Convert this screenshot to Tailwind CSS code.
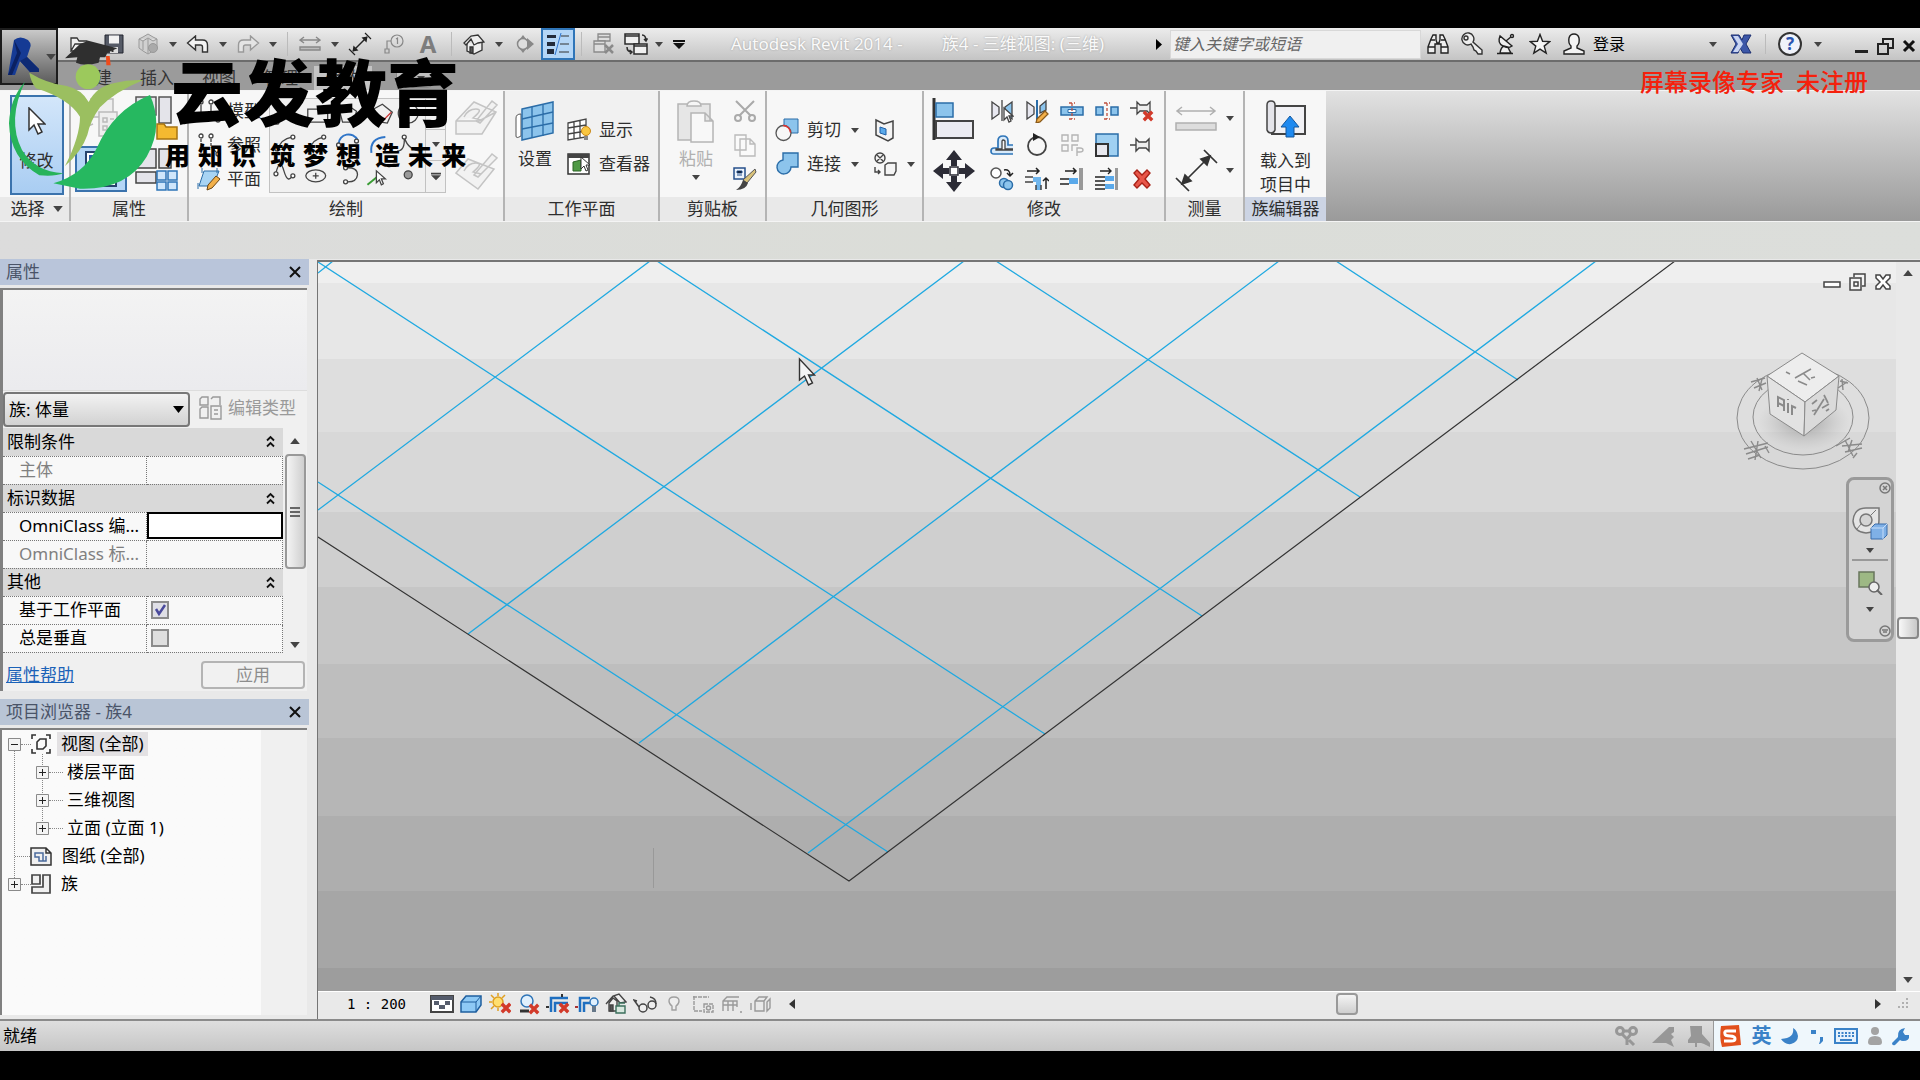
<!DOCTYPE html>
<html lang="zh-CN">
<head>
<meta charset="utf-8">
<title>Autodesk Revit 2014 - 族4</title>
<script src="https://cdn.jsdelivr.net/npm/@tailwindcss/browser@4"></script>
</head>
<body class="relative flex min-h-screen flex-col overflow-x-hidden bg-black font-['Noto_Sans','Noto_Sans_CJK_SC',sans-serif] text-[17px] leading-6 text-[#2e2e2e]">
<svg class="hidden">
  <symbol id="dd" viewBox="0 0 8 5"><path d="M0 0h8L4 5z" fill="#444"/></symbol>
  <symbol id="rx" viewBox="0 0 10 10"><path d="M1.500 1.500l7 7M8.500 1.500l-7 7" stroke="#d23a2a" stroke-width="2.800" fill="none"/></symbol>
  <symbol id="plus" viewBox="0 0 13 13"><path d="M.5.5h12v12H.5z" fill="#f4f4f4" stroke="#8a8a8a"/><path d="M3 6.500h7M6.500 3v7" stroke="#222"/></symbol>
  <symbol id="minus" viewBox="0 0 13 13"><path d="M.5.5h12v12H.5z" fill="#f4f4f4" stroke="#8a8a8a"/><path d="M3 6.500h7" stroke="#222"/></symbol>
  <symbol id="chev" viewBox="0 0 9 13"><path d="M1 5.500l3.500-3.500L8 5.500M1 11.500l3.500-3.500L8 11.500" fill="none" stroke="#111" stroke-width="1.800"/></symbol>
  <symbol id="arrow" viewBox="0 0 18 28"><path d="M1 1v22l5-5 4 9 4-2-4-8h7z" fill="#fff" stroke="#333" stroke-width="1.500"/></symbol>
</svg>

<div class="h-7 shrink-0"></div>

<!-- title bar -->
<header class="relative flex h-[34px] shrink-0 items-center border-b-2 border-[#6c6c6c] bg-linear-to-b from-[#ececec] to-[#c4c4c4] pl-[63px]">
  <button aria-label="应用程序菜单" class="absolute left-0 top-0 z-10 flex h-[57px] w-[58px] items-center border-2 border-[#1c1c1c] bg-linear-to-b from-[#c9c9c9] to-[#5d5d5d] pl-1">
    <svg class="h-10 w-9" viewBox="0 0 36 40"><path d="M8 3q6-5 14 0 4 4 2 8l-3 9 12 12v3h-9L14 24 9 38H2z" fill="#153a94"/><path d="M8 3l3 13L2 38h4l9-22z" fill="#0b2161"/><path d="M14 24l7-4 12 12v3h-9z" fill="#0e2a74"/></svg>
    <svg class="ml-1 h-[6px] w-[10px]"><use href="#dd"/></svg>
  </button>
  <nav aria-label="快速访问工具栏" class="flex h-8 shrink-0 items-center">
    <button aria-label="打开" class="flex w-[34px] justify-center"><svg class="h-5 w-6" viewBox="0 0 24 20" fill="#eee" stroke="#333" stroke-width="1.300"><path d="M3 17V4h6l2 3h8v3M3 17l4-7h15l-4 7z"/></svg></button>
    <button aria-label="保存" class="flex w-[34px] justify-center"><svg class="size-5" viewBox="0 0 20 20"><path d="M1 1h18v18H3l-2-2z" fill="#555a66" stroke="#22252e"/><path d="M5 1.500h10v8H5z" fill="#f2f2f2"/><path d="M6 13h8v6H6z" fill="#ddd"/><path d="M7.500 14h2v4h-2z" fill="#333"/></svg></button>
    <button aria-label="同步" class="flex w-[34px] justify-center"><svg class="size-[22px]" viewBox="0 0 22 22" fill="#d0d0d0" stroke="#999"><path d="M2 6l4-2 5-3 5 3 4 2v9l-4 3-5 3-5-3-4-3zM6 8v9M11 6v14M2 6l4 2 5-3 5 3 4-2"/><circle cx="16" cy="15" r="4.500" fill="#aaa"/></svg></button>
    <button aria-label="同步选项" class="flex w-4 justify-center"><svg class="h-[5px] w-2"><use href="#dd"/></svg></button>
    <button aria-label="放弃" class="flex w-[34px] justify-center"><svg class="h-[18px] w-6" viewBox="0 0 24 18" fill="#f4f4f4" stroke="#333" stroke-width="1.400"><path d="M1.500 8l8-7v4h7q5 0 5 5v7h-5v-5q0-2-2-2h-5v5z"/></svg></button>
    <button aria-label="放弃列表" class="flex w-4 justify-center"><svg class="h-[5px] w-2"><use href="#dd"/></svg></button>
    <button aria-label="重做" class="flex w-[34px] justify-center"><svg class="h-[18px] w-6" viewBox="0 0 24 18" fill="#e4e4e4" stroke="#999" stroke-width="1.400"><path d="M22.500 8l-8-7v4h-7q-5 0-5 5v7h5v-5q0-2 2-2h5v5z"/></svg></button>
    <button aria-label="重做列表" class="flex w-4 justify-center"><svg class="h-[5px] w-2"><use href="#dd"/></svg></button>
    <span class="flex h-6 w-3 justify-center"><i class="w-px bg-[#bbb]"></i></span>
    <button aria-label="测量" class="flex w-[34px] justify-center"><svg class="h-4 w-[22px]" viewBox="0 0 22 16" fill="none" stroke="#888" stroke-width="1.400"><path d="M1 4h20M5 1L1 4l4 3M17 1l4 3-4 3"/><path d="M1 11h20v3H1z" fill="#bbb"/></svg></button>
    <button aria-label="测量列表" class="flex w-4 justify-center"><svg class="h-[5px] w-2"><use href="#dd"/></svg></button>
    <button aria-label="对齐尺寸标注" class="flex w-[34px] justify-center"><svg class="size-6" viewBox="0 0 24 24" fill="none" stroke="#222" stroke-width="1.500"><path d="M5 19L19 5"/><path d="M1 17l6 6M17 1l6 6" stroke-width="1.200"/><path d="M4.500 19.500l1-6 5 5zM19.500 4.500l-6 1 5 5z" fill="#222" stroke="none"/></svg></button>
    <button aria-label="标记" class="flex w-[34px] justify-center"><svg class="size-5" viewBox="0 0 20 20" fill="none" stroke="#888" stroke-width="1.200"><circle cx="13" cy="7" r="6"/><path d="M12 5l1.500-1v6M7 7H3v8M1 15h4v4H1z"/></svg></button>
    <button aria-label="文字" class="flex w-[34px] justify-center text-[24px] font-bold text-[#7d7d7d]">A</button>
    <span class="flex h-6 w-3 justify-center"><i class="w-px bg-[#bbb]"></i></span>
    <button aria-label="默认三维视图" class="flex w-[34px] justify-center"><svg class="size-[22px]" viewBox="0 0 22 22" fill="#eee" stroke="#333" stroke-width="1.300"><path d="M4 10v8l7 3 8-4V9"/><path d="M1 10l7-7 7-1 6 7-6 1-4 2-3-6-5 6z"/><path d="M7 14h3v6H7z" fill="#555"/></svg></button>
    <button aria-label="三维视图列表" class="flex w-4 justify-center"><svg class="h-[5px] w-2"><use href="#dd"/></svg></button>
    <button aria-label="剖面" class="flex w-[34px] justify-center"><svg class="size-5" viewBox="0 0 20 20"><circle cx="9" cy="10" r="5.500" fill="#ddd" stroke="#888" stroke-width="1.500"/><path d="M9 1l3 4H6zM13 4l7 6-7 6zM9 19l3-4H6z" fill="#888"/></svg></button>
    <button aria-label="细线" class="flex h-8 w-[34px] items-center justify-center border-2 border-[#2f75b8] bg-[#b4d6f7]"><svg class="h-[22px] w-6" viewBox="0 0 24 22"><path d="M1 2h9v3H1zM1 9h8v4H1zM1 16h7v5H1z" fill="#222b3c"/><path d="M15 3h8M14 11h9M13 19h10" stroke="#333"/><path d="M15 0L9 22" stroke="#2f75d0"/></svg></button>
    <span class="flex h-6 w-3 justify-center"><i class="w-px bg-[#bbb]"></i></span>
    <button aria-label="关闭隐藏窗口" class="flex w-[34px] justify-center"><svg class="size-[22px]" viewBox="0 0 22 22" fill="#ddd" stroke="#8a8a8a" stroke-width="1.300"><path d="M5 1h12v7H5z"/><path d="M1 8h11v11H1zM5 4h12M1 11h11"/><path d="M12 12l8 8M20 12l-8 8" stroke-width="2.500"/></svg></button>
    <button aria-label="切换窗口" class="flex w-[30px] justify-center"><svg class="h-[22px] w-6" viewBox="0 0 24 22" fill="#f0f0f0" stroke="#2b2b2b" stroke-width="1.500"><path d="M1 1h14v10H1zM1 3h14"/><path d="M10 11h13v10H10zM10 13h13"/><path d="M18 2q4 0 4 6M20 6l2 2 1.500-2.500M3 14q0 5 5 5M5.500 17l2.500 2-2 2" fill="none"/></svg></button>
    <button aria-label="窗口列表" class="flex w-4 justify-center"><svg class="h-[5px] w-2"><use href="#dd"/></svg></button>
    <button aria-label="自定义快速访问工具栏" class="flex w-6 justify-center"><svg class="h-[9px] w-3" viewBox="0 0 12 9"><path d="M0 0h12v2H0zM0 3h12L6 9z" fill="#111"/></svg></button>
  </nav>
  <h1 class="flex min-w-0 flex-1 justify-between whitespace-nowrap pl-10 pr-[52px] text-[#fafafa] [text-shadow:0_0_2px_#999]"><span>Autodesk Revit 2014 -</span><span>族4 - 三维视图: (三维)</span></h1>
  <svg class="mr-2 h-[11px] w-[6px]" viewBox="0 0 6 11"><path d="M0 0l6 5.500L0 11z" fill="#000"/></svg>
  <input aria-label="搜索" placeholder="键入关键字或短语" class="h-[29px] w-[251px] border border-[#d8d8d8] bg-[#f0f0f0] px-0.5 text-[16px] italic placeholder:text-[#666]">
  <div class="flex shrink-0 items-center">
    <button aria-label="搜索帮助" class="flex w-[34px] justify-center"><svg class="size-[22px]" viewBox="0 0 22 22" fill="#eee" stroke="#222" stroke-width="1.400"><path d="M4 6l2-4h3v5l1 3h2l1-3V2h3l2 4 3 8v6h-7v-9h-6v9H1v-6zM1 14h7M14 14h7M4 7h4M14 7h4"/></svg></button>
    <button aria-label="速博" class="flex w-[34px] justify-center"><svg class="size-6" viewBox="0 0 24 24" fill="#eee" stroke="#333" stroke-width="1.400"><path d="M11 12a6 6 0 1 1 2-2l9 8v4h-4l-2-3-2-1-1-3z"/><circle cx="6" cy="6" r="2"/></svg></button>
    <button aria-label="通讯中心" class="flex w-[34px] justify-center"><svg class="size-[22px]" viewBox="0 0 22 22" fill="#eee" stroke="#222" stroke-width="1.400"><path d="M5 3q-3 7 3 10 5 3 9 0zM11 8l6-5M5 20q1-6 4-7l4 1q1 3 3 6zM2 20.500h16"/><circle cx="17" cy="3" r="1.500"/></svg></button>
    <button aria-label="收藏夹" class="flex w-[34px] justify-center"><svg class="size-[22px]" viewBox="0 0 22 22" fill="#f4f4f4" stroke="#222" stroke-width="1.400"><path d="M11 1.500l2.600 6.800 7.200.3-5.600 4.500 2 7-6.200-4-6.200 4 2-7L1.200 8.600l7.200-.3z"/></svg></button>
    <button class="flex items-center gap-2 whitespace-nowrap pl-1.5 text-[16px] text-black"><svg class="size-[22px]" viewBox="0 0 22 22" fill="#f4f4f4" stroke="#222" stroke-width="1.400"><path d="M8 13q-3-3-2-8 1-4 5-4t5 4q1 5-2 8v2l7 3v3H1v-3l7-3z"/></svg>登录</button>
    <svg class="ml-[84px] h-[5px] w-2"><use href="#dd"/></svg>
    <button aria-label="Exchange" class="flex w-[48px] justify-center"><svg class="h-5 w-[22px]" viewBox="0 0 22 20"><path d="M1 1h8l3 5 2-5h7l-5 9 5 9h-8l-3-5-2 5H1l5-9z" fill="#3c57a8" stroke="#1c2f70"/><path d="M3 2h5l5 8-5 8H3l5-8z" fill="#c9d5f2"/></svg></button>
    <i class="h-5 w-px bg-[#bbb]"></i>
    <button aria-label="帮助" class="ml-3 flex size-6 items-center justify-center rounded-full border-2 border-[#333] bg-[#f0f3fa] text-[17px] font-bold text-[#2a55b0]">?</button>
    <svg class="ml-3 h-[5px] w-2"><use href="#dd"/></svg>
  </div>
  <div class="flex shrink-0 items-center gap-2 pl-8 pr-1 pt-1">
    <button aria-label="最小化"><svg class="h-4 w-[15px]" viewBox="0 0 15 16"><path d="M1 12h13v3H1z" fill="#222"/></svg></button>
    <button aria-label="还原"><svg class="size-[17px]" viewBox="0 0 17 17" fill="none" stroke="#222" stroke-width="2"><path d="M6 6V1h10v9h-5"/><path d="M1 6h10v10H1z"/></svg></button>
    <button aria-label="关闭"><svg class="size-[14px]" viewBox="0 0 14 14" stroke="#111" stroke-width="3"><path d="M2 2l10 10M12 2L2 12"/></svg></button>
  </div>
</header>

<!-- ribbon tabs -->
<nav aria-label="功能区选项卡" class="flex h-7 shrink-0 items-center gap-7 bg-[#9b9b9b] pl-[78px] pt-1 text-[#333]">
  <a href="#">创建</a><a href="#">插入</a><a href="#">视图</a><a href="#">管理</a>
  <a href="#" class="-ml-3 h-6 bg-[#c4c4c4] px-3">修改</a>
  <button aria-label="最小化面板" class="-ml-1 flex h-5 w-9 items-center justify-between rounded border border-[#8a8a8a] bg-[#c0c0c0] px-1.5"><svg class="h-[5px] w-2 rotate-180"><use href="#dd"/></svg><svg class="h-[5px] w-2"><use href="#dd"/></svg></button>
</nav>

<!-- ribbon -->
<section class="flex h-33 shrink-0 overflow-hidden border-y border-[#f4f4f4] bg-linear-to-b from-[#e2e2e2] to-[#9a9a9a]">
  <section class="flex w-[71px] shrink-0 flex-col border-r-2 border-[#b4b4b4] bg-[#f7f7f7]">
    <div class="flex h-[106px] justify-center pl-1 pt-1">
      <button class="flex h-[100px] w-[54px] flex-col items-center border-2 border-[#3b73ad] bg-linear-to-b from-[#d3e6fa] to-[#a9cdf2] pt-2.5"><svg class="h-7 w-[18px]"><use href="#arrow"/></svg><span class="mt-3.5">修改</span></button>
    </div>
    <button class="flex h-6 items-center justify-center gap-2 bg-[#e9e9e9] pl-1">选择<svg class="h-[6px] w-[10px]"><use href="#dd"/></svg></button>
  </section>
  <section class="flex w-[118px] shrink-0 flex-col border-r-2 border-[#b4b4b4] bg-[#f7f7f7]">
    <div class="grid h-[106px] grid-cols-2 place-items-center gap-1 px-1 py-1">
      <button aria-label="类型属性"><svg class="size-10" viewBox="0 0 40 40" fill="#eee" stroke="#bbb" stroke-width="1.500"><path d="M10 1h22v18H10z"/><path d="M18 14h18v24H18zM22 20h4v4h-4zM22 28h4v4h-4zM29 21h4M29 30h4"/><path d="M2 30l10-4"/></svg></button>
      <button aria-label="族类别"><svg class="size-11" viewBox="0 0 44 44" fill="#e4e4ea" stroke="#555" stroke-width="1.500"><path d="M1 1h20v18H1zM24 1h12v26H24z"/><path d="M22 28h7l2 3h11v12H22z" fill="#f4b930" stroke="#a87410"/></svg></button>
      <button aria-label="属性" class="flex h-[46px] w-[52px] items-center justify-center border-2 border-[#3b73ad] bg-[#b4d6f7]"><svg class="h-9 w-8" viewBox="0 0 32 36"><path d="M1 1h30v34H1z" fill="#fff" stroke="#27446e" stroke-width="2"/><path d="M4 4h24v15H4z" fill="#2a5fa8"/><path d="M5 24h22M5 30h22" stroke="#555"/></svg></button>
      <button aria-label="族类型"><svg class="size-11" viewBox="0 0 44 44" fill="#e4e4ea" stroke="#444" stroke-width="1.500"><path d="M1 2h20v19H1zM24 2h12v19H24zM1 25h20v11H1z"/><path d="M22 24h9v9h-9zM33 24h9v9h-9zM22 35h9v8h-9zM33 35h9v8h-9z" fill="#cfe6fb" stroke="#2f75b8"/></svg></button>
    </div>
    <h2 class="h-6 bg-[#e9e9e9] text-center">属性</h2>
  </section>
  <section class="flex w-[316px] shrink-0 flex-col border-r-2 border-[#b4b4b4] bg-[#f7f7f7]">
    <div class="flex h-[106px] items-center pl-2 pt-0.5">
      <div class="flex flex-col gap-2.5">
        <button class="flex items-center gap-1.5"><svg class="size-6" viewBox="0 0 24 24" fill="#fff" stroke="#444" stroke-width="1.300"><path d="M4 6v12M14 6v8l6 6"/><circle cx="4" cy="3" r="2"/><circle cx="14" cy="3" r="2"/><circle cx="21" cy="21" r="2"/></svg>模型</button>
        <button class="flex items-center gap-1.5"><svg class="size-6" viewBox="0 0 24 24" fill="#fff" stroke="#444" stroke-width="1.300"><path d="M4 6v12M14 6v8l6 6" stroke-dasharray="3 1"/><circle cx="4" cy="3" r="2"/><circle cx="14" cy="3" r="2"/><circle cx="21" cy="21" r="2"/></svg>参照</button>
        <button class="flex items-center gap-1.5"><svg class="size-6" viewBox="0 0 24 24"><path d="M7 4h15l-6 15H2z" fill="#a8d4f4" stroke="#2b6da8"/><path d="M5 1v5M20 1v5M1 16v6" stroke="#2b6da8"/><path d="M11 18l8-9 4 3-8 9-5 2z" fill="#f2b04a" stroke="#6b4513"/></svg>平面</button>
      </div>
      <div class="ml-2 flex h-[95px] w-[177px] border border-[#c2c2c2] bg-[#f1f1f1]">
        <svg class="h-[93px] w-[156px]" viewBox="0 0 156 93" fill="none" stroke="#444" stroke-width="1.300">
          <path d="M8 22L22 8M38 10h20v13H38zM70 12l8-6 9 6-3 11H73z"/><path d="M102 11l11-6 10 8-5 11-13-2z"/><path d="M108 27l14-14" stroke="#c33"/><circle cx="139" cy="14" r="10"/><circle cx="139" cy="14" r="2"/>
          <path d="M8 50q3-10 14-12M40 50q3-10 14-12"/><path d="M69 45a10 10 0 0 1 19-4M102 54q-2-15 14-16" stroke="#2f75c8" stroke-width="2"/><path d="M128 52q8 0 7-14 4 14 18 14"/>
          <path d="M6 74q4-16 8-2t9 4"/><ellipse cx="46" cy="77" rx="10" ry="6"/><path d="M46 74v6M43 77h6M76 69q12-1 12 7-1 8-12 7"/><path d="M98 86l10-8" stroke="#3a9c34" stroke-width="2"/><circle cx="139" cy="76" r="4" fill="#999"/>
          <g fill="#fff"><circle cx="7" cy="23" r="2"/><circle cx="23" cy="38" r="2"/><circle cx="7" cy="50" r="2"/><circle cx="54" cy="38" r="2"/><circle cx="40" cy="50" r="2"/><circle cx="69" cy="46" r="2"/><circle cx="87" cy="42" r="2"/><circle cx="135" cy="38" r="2"/><circle cx="6" cy="75" r="2"/><circle cx="23" cy="77" r="2"/><circle cx="76" cy="69" r="2"/><circle cx="76" cy="83" r="2"/><circle cx="70" cy="11" r="2"/></g>
          <path d="M107 72v12l3-3 2 5 2-1-2-5h4z" fill="#fff"/>
        </svg>
        <div class="flex w-5 flex-col divide-y divide-[#c2c2c2] border-l border-[#c2c2c2]">
          <button aria-label="上一行" class="flex flex-1 items-center justify-center"><svg class="h-[5px] w-2 rotate-180"><use href="#dd"/></svg></button>
          <button aria-label="下一行" class="flex flex-1 items-center justify-center"><svg class="h-[5px] w-2"><use href="#dd"/></svg></button>
          <button aria-label="更多" class="flex flex-1 items-center justify-center"><svg class="h-[9px] w-[10px]" viewBox="0 0 12 9"><path d="M0 0h12v2H0zM0 3h12L6 9z" fill="#444"/></svg></button>
        </div>
      </div>
      <div class="ml-2 flex flex-col gap-2">
        <svg class="h-11 w-11" viewBox="0 0 44 44" fill="#f2f2f2" stroke="#c4c4c4" stroke-width="1.500"><path d="M2 24L20 5l22 10-14 22H2zM2 24h23l17-9M10 20q4-8 12-8t-3 9l8 2M22 24L38 4l5 4-17 18z"/></svg>
        <svg class="h-11 w-11" viewBox="0 0 44 44" fill="#f2f2f2" stroke="#c4c4c4" stroke-width="1.500"><path d="M2 24L14 10l26 10-16 20zM10 22q4-8 12-8t-3 9l8 2M20 26L38 5l5 4-19 19z"/></svg>
      </div>
    </div>
    <h2 class="h-6 bg-[#ededed] text-center">绘制</h2>
  </section>
  <section class="flex w-[155px] shrink-0 flex-col border-r-2 border-[#b4b4b4] bg-[#f1f1f1]">
    <div class="flex h-[106px] pl-2">
      <button class="flex w-11 flex-col items-center pt-2.5"><svg class="size-10" viewBox="0 0 40 40"><path d="M1 17q0-4 5-4v22q-5 3-5 0z" fill="#fff" stroke="#555"/><path d="M7 8l31-7v31L7 39z" fill="#8cc4ec" stroke="#2b6da8" stroke-width="1.500"/><path d="M17 6v31M28 4v31M7 18l31-7M7 28l31-6" stroke="#2b6da8" stroke-width="1.300"/></svg><span class="mt-1.5">设置</span></button>
      <div class="ml-2.5 flex flex-col gap-2.5 pt-[27px]">
        <button class="flex items-center gap-2"><svg class="size-6" viewBox="0 0 24 24"><path d="M1 5l18-4v18L1 22zM7 4v17M13 3v17M1 10l18-3M1 16l18-3" fill="#fff" stroke="#444" stroke-width="1.300"/><circle cx="19" cy="13" r="4.500" fill="#f9c640" stroke="#c98a1c"/><path d="M17 18h4v4h-4z" fill="#888"/></svg>显示</button>
        <button class="flex items-center gap-2"><svg class="size-6" viewBox="0 0 24 24"><path d="M1 2h21v20H1z" fill="#fff" stroke="#333" stroke-width="1.500"/><path d="M1 2h21v4H1z" fill="#444"/><path d="M6 10l8-2v11H6z" fill="#4f9a45" stroke="#2c6426"/><path d="M14 5v12l3-3 2 5 2-1-2-5h4z" fill="#fff" stroke="#333"/></svg>查看器</button>
      </div>
    </div>
    <h2 class="h-6 bg-[#e9e9e9] text-center">工作平面</h2>
  </section>
  <section class="flex w-[107px] shrink-0 flex-col border-r-2 border-[#b4b4b4] bg-[#f7f7f7]">
    <div class="flex h-[106px] justify-between pl-3.5 pr-2 pt-0.5">
      <button class="flex flex-col items-center pt-1.5 text-[#b0b0b0]"><svg class="size-11" viewBox="0 0 44 44" fill="#e6e6e6" stroke="#b5b5b5" stroke-width="1.500"><path d="M4 5h32v36H4z"/><path d="M13 7q0-5 7-5t7 5z" fill="#f6f6f6"/><path d="M17 14h14l8 8v21H17zM31 14v8h8" fill="#f8f8f8"/></svg><span class="mt-1">粘贴</span><svg class="mt-1 h-[5px] w-2"><use href="#dd"/></svg></button>
      <div class="flex flex-col items-center justify-center gap-2.5">
        <button aria-label="剪切"><svg class="size-6" viewBox="0 0 24 24" fill="none" stroke="#aaa" stroke-width="2"><path d="M3 2l15 15M21 2L6 17"/><circle cx="5" cy="19" r="3"/><circle cx="19" cy="19" r="3"/></svg></button>
        <button aria-label="复制"><svg class="size-6" viewBox="0 0 24 24" fill="#fafafa" stroke="#bbb" stroke-width="1.400"><path d="M2 2h11v15H2zM7 6h10l5 5v12H7zM17 6v5h5"/></svg></button>
        <button aria-label="匹配类型"><svg class="size-6" viewBox="0 0 24 24"><path d="M1 1h11v11H1z" fill="#eef4fb" stroke="#27508c" stroke-width="1.500"/><path d="M4 4h5v2H4zM4 8h5" stroke="#27508c"/><path d="M22 2l1 3-9 11-4-3z" fill="#d9c27a" stroke="#555"/><path d="M10 13l5 3q-2 7-12 7 5-3 7-10z" fill="#444"/></svg></button>
      </div>
    </div>
    <h2 class="h-6 bg-[#e9e9e9] text-center">剪贴板</h2>
  </section>
  <section class="flex w-[157px] shrink-0 flex-col border-r-2 border-[#b4b4b4] bg-[#f7f7f7]">
    <div class="flex h-[106px] gap-3.5 pl-2 pt-[27px]">
      <div class="flex flex-col gap-2.5">
        <button class="flex items-center gap-2"><svg class="size-6" viewBox="0 0 24 24"><path d="M9 1h14v14H9z" fill="#8cc4ec" stroke="#2b6da8"/><circle cx="8.500" cy="15" r="7.500" fill="#f7f7f7" stroke="#555" stroke-width="1.300"/><path d="M8 7.500a7.500 7.500 0 0 1 7.500 7" fill="none" stroke="#d33" stroke-width="1.500"/></svg>剪切<svg class="ml-0.5 h-[5px] w-2"><use href="#dd"/></svg></button>
        <button class="flex items-center gap-2"><svg class="size-6" viewBox="0 0 24 24" fill="#8cc4ec" stroke="#2b6da8" stroke-width="1.400"><path d="M8 1h15v14h-7a7 7 0 1 1-8-7z"/></svg>连接<svg class="ml-0.5 h-[5px] w-2"><use href="#dd"/></svg></button>
      </div>
      <div class="flex flex-col gap-2.5">
        <button aria-label="拆分面"><svg class="size-6" viewBox="0 0 24 24"><path d="M3 2l8 4 9-3v17l-5 3L3 17z" fill="#f4f4f4" stroke="#444" stroke-width="1.500"/><path d="M7 9l6 2v6l-6-2z" fill="#5aa9ea" stroke="#1f5fa6"/></svg></button>
        <button aria-label="填色" class="flex items-center gap-2.5"><svg class="size-6" viewBox="0 0 24 24" fill="#f4f4f4" stroke="#444" stroke-width="1.400"><circle cx="7" cy="6" r="5"/><path d="M4 3l6 6M10 3L4 9M12 13l3-2h8v8l-2 4h-9zM2 15v5h5M5 18l2 2-2 2"/></svg><svg class="h-[5px] w-2"><use href="#dd"/></svg></button>
      </div>
    </div>
    <h2 class="h-6 bg-[#e9e9e9] text-center">几何图形</h2>
  </section>
  <section class="flex w-[242px] shrink-0 flex-col border-r-2 border-[#b4b4b4] bg-[#f7f7f7]">
    <div class="flex h-[106px] items-center gap-3.5 pl-2 pt-0.5">
      <div class="flex flex-col gap-2">
        <button aria-label="对齐"><svg class="size-11" viewBox="0 0 44 44"><path d="M2 1v42" stroke="#333" stroke-width="3"/><path d="M4 6h17v14H4z" fill="#8cc4ec" stroke="#2b6da8" stroke-width="1.500"/><path d="M4 24h37v17H4z" fill="#ececf2" stroke="#444" stroke-width="2"/></svg></button>
        <button aria-label="移动"><svg class="size-11" viewBox="0 0 44 44"><path d="M22 1l8 10h-5v6h-6v-6h-5zM22 43l8-10h-5v-6h-6v6h-5zM1 22l10-8v5h6v6h-6v5zM43 22l-10-8v5h-6v6h6v5z" fill="#2c2c36"/><path d="M18 18h8v8h-8z" fill="#fff" stroke="#2c2c36" stroke-width="1.500"/></svg></button>
      </div>
      <div class="grid grid-cols-5 gap-x-[11px] gap-y-2.5">
        <button aria-label="镜像-拾取轴"><svg class="size-6" viewBox="0 0 24 24" fill="#e8e8f0" stroke="#444" stroke-width="1.300"><path d="M2 3l7 5v7l-7 5zM12 1v21"/><path d="M22 3l-7 5v7l7 5z" fill="#8cc4ec"/><path d="M14 9v12l3-3 2 5 2-1-2-5h4z" fill="#fff"/></svg></button>
        <button aria-label="镜像-绘制轴"><svg class="size-6" viewBox="0 0 24 24" fill="#e8e8f0" stroke="#444" stroke-width="1.300"><path d="M2 3l7 5v7l-7 5z"/><path d="M12 1v21" stroke="#2b6da8" stroke-width="2"/><path d="M21 2l-6 5v7l6-3z" fill="#8cc4ec"/><path d="M12 20l8-8 3 3-8 8-4 1z" fill="#f2b04a" stroke="#8a5a1b"/></svg></button>
        <button aria-label="拆分图元"><svg class="size-6" viewBox="0 0 24 24"><path d="M1 8h22v8H1z" fill="#8cc4ec" stroke="#2b6da8" stroke-width="1.500"/><path d="M8 10.500h8v3H8z" fill="#fff" stroke="#2b6da8"/><path d="M12 4v16M9 4h6M9 20h6" stroke="#c0503e" stroke-width="1.300" stroke-dasharray="3 2"/></svg></button>
        <button aria-label="用间隙拆分"><svg class="size-6" viewBox="0 0 24 24"><path d="M1 8h7v8H1zM16 8h7v8h-7z" fill="#8cc4ec" stroke="#2b6da8" stroke-width="1.500"/><path d="M12 4v16M9 4h6M9 20h6" stroke="#c0503e" stroke-width="1.300" stroke-dasharray="3 2"/></svg></button>
        <button aria-label="解锁"><svg class="size-6" viewBox="0 0 24 24" fill="#eee" stroke="#444" stroke-width="1.300"><path d="M0 9h7M7 3v12l3-3h7l3 3V3l-3 3h-7z"/><use href="#rx" x="12" y="11" width="12" height="12"/></svg></button>
        <button aria-label="偏移"><svg class="size-6" viewBox="0 0 24 24" fill="none" stroke="#2f75b8" stroke-width="1.700"><path d="M23 21H4q-3 0-3-3t3-3h4V8q0-5 5-5t5 5v4h5" fill="#d8eafa"/><path d="M23 17H6v-1h6V8q1-2 3 0v8h8" stroke="#444" stroke-width="1.300" fill="#f7f7f7"/></svg></button>
        <button aria-label="旋转"><svg class="size-6" viewBox="0 0 24 24"><circle cx="12" cy="13" r="9" fill="none" stroke="#444" stroke-width="1.800"/><path d="M8 0l7 4-7 4z" fill="#222"/></svg></button>
        <button aria-label="阵列"><svg class="size-6" viewBox="0 0 24 24" fill="none" stroke="#b5b5b5" stroke-width="1.400"><path d="M2 2h6v6H2zM12 2h6v6h-6zM2 12h6v6H2zM12 18v-6h6M17 23v-8h3q3 0 3 2t-3 2h-3"/></svg></button>
        <button aria-label="缩放"><svg class="size-6" viewBox="0 0 24 24"><path d="M1 1h22v22H1z" fill="#9fd0f2" stroke="#2b6da8" stroke-width="1.500"/><path d="M1 11h12v12H1z" fill="#e8e8ee" stroke="#333" stroke-width="2"/></svg></button>
        <button aria-label="锁定"><svg class="size-6" viewBox="0 0 24 24" fill="#eee" stroke="#444" stroke-width="1.400"><path d="M0 12h6M6 6v12l3-3h7l3 3V6l-3 3H9z"/></svg></button>
        <button aria-label="复制图元"><svg class="size-6" viewBox="0 0 24 24" fill="#fff" stroke="#555" stroke-width="1.500"><circle cx="6" cy="6" r="5"/><circle cx="14" cy="16" r="4.500" fill="#8cc4ec" stroke="#2b6da8"/><circle cx="18" cy="18" r="4.500" fill="#8cc4ec" stroke="#2b6da8"/><path d="M14 3q6-1 6 5M17 6l3 3 3-3" fill="none" stroke="#222"/></svg></button>
        <button aria-label="修剪为角"><svg class="size-6" viewBox="0 0 24 24" fill="none"><path d="M2 4h12M11 1l3 3-3 3M21 22V11M18 14l3-3 3 3" stroke="#222" stroke-width="1.500"/><path d="M8 10h8v13h-5v-8H8z" fill="#6fb5ec"/><path d="M0 10h8M0 15h8M11 18v5M16 18v5" stroke="#444" stroke-width="1.500"/></svg></button>
        <button aria-label="修剪单个"><svg class="size-6" viewBox="0 0 24 24" fill="none"><path d="M19 1h4v22h-4z" fill="#999"/><path d="M5 4h11M13 1l3 3-3 3M0 12h9M0 17h9" stroke="#222" stroke-width="1.500"/><path d="M9 11h9v6H9z" fill="#5aa9ea"/></svg></button>
        <button aria-label="修剪多个"><svg class="size-6" viewBox="0 0 24 24" fill="none"><path d="M20 1h3v22h-3z" fill="#999"/><path d="M5 4h11M13 1l3 3-3 3M0 10h10M0 14h10M0 18h10M0 22h10" stroke="#222" stroke-width="1.400"/><path d="M10 9h9v5h-9zM10 17h9v5h-9z" fill="#5aa9ea"/></svg></button>
        <button aria-label="删除"><svg class="size-6" viewBox="0 0 24 24"><path d="M4 6l3-3 5 5 5-5 3 3-5 6 5 6-3 3-5-5-5 5-3-3 5-6z" fill="#e8574a" stroke="#a92318" stroke-width="1.400"/></svg></button>
      </div>
    </div>
    <h2 class="h-6 bg-[#e9e9e9] text-center">修改</h2>
  </section>
  <section class="flex w-[79px] shrink-0 flex-col border-r-2 border-[#b4b4b4] bg-[#f7f7f7]">
    <div class="flex h-[106px] flex-col justify-center gap-2 pl-2">
      <button aria-label="测量距离" class="flex items-center gap-2"><svg class="size-11" viewBox="0 0 44 44" fill="none" stroke="#b0b0b0" stroke-width="1.500"><path d="M3 15h38M8 11l-5 4 5 4M36 11l5 4-5 4"/><path d="M2 27h40v7H2z" fill="#ddd"/></svg><svg class="h-[5px] w-2"><use href="#dd"/></svg></button>
      <button aria-label="尺寸标注" class="flex items-center gap-2"><svg class="size-11" viewBox="0 0 44 44" fill="none" stroke="#333" stroke-width="1.700"><path d="M9 35L35 9M2 30l13 13M30 2l13 13"/><path d="M8 36l3-9 6 6zM36 8l-9 3 6 6z" fill="#333"/></svg><svg class="h-[5px] w-2"><use href="#dd"/></svg></button>
    </div>
    <h2 class="h-6 bg-[#e9e9e9] text-center">测量</h2>
  </section>
  <section class="flex w-[81px] shrink-0 flex-col bg-[#f7f7f7]">
    <button class="flex h-[106px] flex-col items-center pt-2"><svg class="size-11" viewBox="0 0 44 44"><path d="M8 7h33v28H8z" fill="#f1f1f5" stroke="#444" stroke-width="2"/><path d="M3 6q0-4 4-4t4 4v25q-1 3-4 3t-4-3z" fill="#e4e4ea" stroke="#444" stroke-width="1.500"/><path d="M26 17l9 11h-5v10h-8V28h-5z" fill="#1f8af0" stroke="#14569c"/></svg><span class="mt-1.5">载入到<br>项目中</span></button>
    <h2 class="h-6 bg-[#ccd4e4] text-center">族编辑器</h2>
  </section>
</section>

<!-- options bar -->
<div class="h-[37px] shrink-0 bg-linear-to-r from-[#dcdcdc] via-[#dbddd8] to-[#dcdedb]"></div>

<main class="flex flex-1 bg-[#e9e9e9]">
  <!-- docked palettes -->
  <aside class="flex w-[317px] shrink-0 flex-col pr-2">
    <section class="flex flex-col">
      <header class="flex h-[26px] items-center justify-between bg-[#b9c5da] pl-1.5 pr-2 text-[#4a5468]"><h2>属性</h2><button aria-label="关闭属性"><svg class="size-3" viewBox="0 0 12 12" stroke="#111" stroke-width="2"><path d="M1 1l10 10M11 1L1 11"/></svg></button></header>
      <div class="mr-0.5 mt-[3px] border-l-3 border-t-2 border-[#808080] bg-[#f0f0f0]">
        <div class="h-[101px] border-b border-[#ddd] bg-linear-to-b from-[#f3f3f3] to-[#ebebee]"></div>
        <div class="flex h-[37px] items-center gap-2">
          <div class="relative">
            <select aria-label="类型选择器" class="h-[35px] w-[187px] appearance-none rounded border-2 border-[#777] bg-linear-to-b from-[#f2f2f2] to-[#d2d2d2] px-1 text-black"><option>族: 体量</option></select>
            <svg class="pointer-events-none absolute right-1.5 top-3.5 h-[7px] w-[11px]" viewBox="0 0 8 5" preserveAspectRatio="none"><path d="M0 0h8L4 5z" fill="#000"/></svg>
          </div>
          <button class="flex items-center gap-1.5 pb-1 text-[#9a9a9a]"><svg class="size-6" viewBox="0 0 24 24" fill="#f0f0f0" stroke="#999" stroke-width="1.400"><path d="M2 3l2-2h6v8H2zM13 3l2-2h7v8M2 13l2-2h6v11H2zM13 10h10v13H13zM16 14h4M16 18h4"/></svg>编辑类型</button>
        </div>
        <div class="flex h-[230px]">
          <table class="w-[280px] table-fixed border-collapse self-start">
            <colgroup><col class="w-[143px]"><col></colgroup>
            <tbody>
              <tr class="h-7 bg-[#d9d9d9] text-black"><th colspan="2" class="p-0 pl-1 pr-2 text-left font-normal"><div class="flex items-center justify-between">限制条件<svg class="h-[13px] w-[9px]"><use href="#chev"/></svg></div></th></tr>
              <tr class="h-7 bg-[#f8f8f8] text-[#808080]"><th class="border border-dotted border-[#777] border-l-0 p-0 pl-4 text-left font-normal">主体</th><td class="border border-dotted border-[#777]"></td></tr>
              <tr class="h-7 bg-[#d9d9d9] text-black"><th colspan="2" class="p-0 pl-1 pr-2 text-left font-normal"><div class="flex items-center justify-between">标识数据<svg class="h-[13px] w-[9px]"><use href="#chev"/></svg></div></th></tr>
              <tr class="h-7 bg-[#f8f8f8] text-black"><th class="border border-dotted border-[#777] border-l-0 whitespace-nowrap p-0 pl-4 text-left font-normal"><label for="omni">OmniClass 编...</label></th><td class="p-0"><input id="omni" class="block h-[27px] w-full border-2 border-black bg-white px-1"></td></tr>
              <tr class="h-7 bg-[#f8f8f8] text-[#808080]"><th class="border border-dotted border-[#777] border-l-0 whitespace-nowrap p-0 pl-4 text-left font-normal">OmniClass 标...</th><td class="border border-dotted border-[#777]"></td></tr>
              <tr class="h-7 bg-[#d9d9d9] text-black"><th colspan="2" class="p-0 pl-1 pr-2 text-left font-normal"><div class="flex items-center justify-between">其他<svg class="h-[13px] w-[9px]"><use href="#chev"/></svg></div></th></tr>
              <tr class="h-7 bg-[#f8f8f8] text-black"><th class="border border-dotted border-[#777] border-l-0 p-0 pl-4 text-left font-normal"><label for="wp">基于工作平面</label></th><td class="border border-dotted border-[#777] p-0 pl-1"><div class="relative size-[18px]"><input id="wp" type="checkbox" checked class="block size-[18px] appearance-none border-2 border-[#8c8c8c] bg-[#dfdfe6]"><svg class="pointer-events-none absolute left-0 top-0 size-[18px]" viewBox="0 0 18 18" fill="none" stroke="#4a4a9c" stroke-width="2.500"><path d="M5 8l3 5 6-9"/></svg></div></td></tr>
              <tr class="h-7 bg-[#f8f8f8] text-black"><th class="border border-dotted border-[#777] border-l-0 p-0 pl-4 text-left font-normal"><label for="vt">总是垂直</label></th><td class="border border-dotted border-[#777] p-0 pl-1"><input id="vt" type="checkbox" class="block size-[18px] appearance-none border-2 border-[#8c8c8c] bg-[#dfdfdf]"></td></tr>
            </tbody>
          </table>
          <div class="flex flex-1 flex-col items-center bg-[#f0f0f0] py-2.5">
            <svg class="h-[6px] w-[10px] shrink-0 rotate-180"><use href="#dd"/></svg>
            <div class="mt-2.5 flex h-[115px] w-[21px] flex-col items-center justify-center gap-0.5 rounded-sm border-2 border-[#999] bg-linear-to-r from-[#f4f4f4] to-[#cfcfcf]"><i class="h-0.5 w-2.5 bg-[#666]"></i><i class="h-0.5 w-2.5 bg-[#666]"></i><i class="h-0.5 w-2.5 bg-[#666]"></i></div>
            <svg class="mt-auto h-[6px] w-[10px] shrink-0"><use href="#dd"/></svg>
          </div>
        </div>
        <div class="flex h-[33px] items-center justify-between pl-[3px] pr-0.5"><a href="#" class="text-[#1b62b8] underline">属性帮助</a><button class="h-7 w-[104px] rounded border-2 border-[#b4b4b4] bg-[#f1f1f1] leading-5 text-[#8c8c8c]">应用</button></div>
      </div>
    </section>
    <section class="mt-2 flex flex-1 flex-col">
      <header class="flex h-[26px] items-center justify-between bg-[#b9c5d6] pl-1.5 pr-2 text-[#4a5468]"><h2>项目浏览器 - 族4</h2><button aria-label="关闭项目浏览器"><svg class="size-3" viewBox="0 0 12 12" stroke="#111" stroke-width="2"><path d="M1 1l10 10M11 1L1 11"/></svg></button></header>
      <div class="relative mb-1 mr-0.5 mt-[3px] flex-1 border-l-2 border-t-2 border-[#808080] bg-linear-to-r from-[#fafafa] from-85% to-[#f0f0f0] to-85% pl-[6px] text-black">
        <i class="absolute left-3 top-5 h-[136px] border-l border-dotted border-[#888]"></i>
        <i class="absolute left-10 top-6 h-[75px] border-l border-dotted border-[#888]"></i>
        <ul class="relative">
          <li><div class="flex h-7 items-center"><svg class="size-[13px]"><use href="#minus"/></svg><i class="w-2.5 border-t border-dotted border-[#888]"></i><svg class="size-5" viewBox="0 0 20 20" fill="none" stroke="#333" stroke-width="1.600"><path d="M1 5V1h4M15 1h4v4M19 15v4h-4M5 19H1v-4M6 8l3-3h6v7l-3 3H6z"/></svg><span class="ml-1.5 bg-[#e3e1e3] px-1">视图 (全部)</span></div>
            <ul class="pl-7">
              <li class="flex h-7 items-center"><svg class="size-[13px]"><use href="#plus"/></svg><i class="mr-1 w-3.5 border-t border-dotted border-[#888]"></i>楼层平面</li>
              <li class="flex h-7 items-center"><svg class="size-[13px]"><use href="#plus"/></svg><i class="mr-1 w-3.5 border-t border-dotted border-[#888]"></i>三维视图</li>
              <li class="flex h-7 items-center"><svg class="size-[13px]"><use href="#plus"/></svg><i class="mr-1 w-3.5 border-t border-dotted border-[#888]"></i>立面 (立面 1)</li>
            </ul>
          </li>
          <li class="flex h-7 items-center pl-[7px]"><i class="w-[15px] border-t border-dotted border-[#888]"></i><svg class="h-5 w-[22px]" viewBox="0 0 22 20" fill="#f0f0f0" stroke="#333" stroke-width="1.500"><path d="M1 2h15l5 5v12H1zM16 2v5h5"/><path d="M5 7h8v8H9v-4H5zM16 10v5h-4" stroke="#4a6a9c" fill="none"/></svg><span class="ml-2.5">图纸 (全部)</span></li>
          <li class="flex h-7 items-center"><svg class="size-[13px]"><use href="#plus"/></svg><i class="w-2.5 border-t border-dotted border-[#888]"></i><svg class="size-5" viewBox="0 0 20 20" fill="#f0f0f0" stroke="#444" stroke-width="1.700"><path d="M1 1h8v9H1zM12 1h7v18H1v-6h11z"/></svg><span class="ml-2.5">族</span></li>
        </ul>
      </div>
    </section>
  </aside>

  <!-- drawing view -->
  <section class="mt-px flex min-w-0 flex-1 flex-col border-l border-t-2 border-[#757575]">
    <div class="flex flex-1">
      <div class="relative min-w-0 flex-1 overflow-hidden">
        <svg class="absolute inset-0 h-full w-full" viewBox="318 262 1578 729" preserveAspectRatio="xMidYMid slice">
          <path d="M318 262h1578v21H318z" fill="#efefef"/><path d="M318 283h1578v76H318z" fill="#e7e7e7"/><path d="M318 359h1578v73H318z" fill="#dedede"/><path d="M318 432h1578v80H318z" fill="#d8d8d8"/><path d="M318 512h1578v75H318z" fill="#cfcfcf"/><path d="M318 587h1578v77H318z" fill="#c6c6c6"/><path d="M318 664h1578v74H318z" fill="#bebebe"/><path d="M318 738h1578v78H318z" fill="#b6b6b6"/><path d="M318 816h1578v75H318z" fill="#aeaeae"/><path d="M318 891h1578v77H318z" fill="#a6a6a6"/><path d="M318 968h1578v24H318z" fill="#9d9d9d"/>
          <path d="M653.500 848v40" stroke="#999"/>
          <g fill="none" stroke="#1fa9e1" stroke-width="1.300">
            <path d="M318 510L650 261M468 634L964 261M639 743L1279 261M808 853L1596 261M318 273L333 261"/>
            <path d="M318 262L1045 734M657 261L1202 616M996 261L1360 497M1336 261L1518 380M318 482L888 852"/>
          </g>
          <path d="M318 537L849 881L1675 261" fill="none" stroke="#333" stroke-width="1.200"/>
          <path d="M799.500 359v21l5-4 4 9 4-2-4-8h6z" fill="#f4f4f4" stroke="#333" stroke-width="1.400"/>
        </svg>
        <div class="absolute right-1 top-2.5 flex items-center gap-2">
          <button aria-label="最小化视图"><svg class="h-5 w-[18px]" viewBox="0 0 18 20"><path d="M1 10h16v5H1z" fill="#fff" stroke="#444" stroke-width="1.500"/></svg></button>
          <button aria-label="还原视图"><svg class="h-[18px] w-[17px]" viewBox="0 0 17 18" fill="#f4f4f4" stroke="#444" stroke-width="1.500"><path d="M5 4V1h11v12h-3M1 5h11v12H1zM5 9h4v4H5z"/></svg></button>
          <button aria-label="关闭视图"><svg class="size-[18px]" viewBox="0 0 18 18" fill="#fff" stroke="#444" stroke-width="1.500"><path d="M2 2h4l3 4 3-4h4v3l-4 4 4 4v3h-4l-3-4-3 4H2v-3l4-4-4-4z"/></svg></button>
        </div>
        <!-- ViewCube -->
        <svg class="absolute right-6 top-[86px] h-[122px] w-[138px]" viewBox="1734 348 138 122" fill="none" stroke="#8a8a8a">
          <defs><radialGradient id="shade"><stop offset="0" stop-color="#777" stop-opacity=".6"/><stop offset="1" stop-color="#aaa" stop-opacity="0"/></radialGradient></defs>
          <ellipse cx="1803" cy="418" rx="66" ry="51"/><ellipse cx="1803" cy="417" rx="50" ry="38"/>
          <ellipse cx="1804" cy="422" rx="46" ry="28" fill="url(#shade)" stroke="none"/>
          <path d="M1767 376l35-23 37 23-34 26z" fill="#ededed"/><path d="M1767 376l38 26-1 34-34-22z" fill="#e2e2e2"/><path d="M1839 376l-34 26-1 34 32-26z" fill="#dadada"/>
          <path d="M1795 378l16-9M1803 373l7 7M1786 372l4 2M1798 381l9 4M1811 378l4-1" stroke-width="1.500"/>
          <path d="M1778 407v-10l6 3v11M1778 403l6 3M1788 403v10M1788 399v1M1792 415v-9l4 2" stroke-width="2"/>
          <path d="M1812 404l5-4M1814 415l10-16M1822 408l7-4M1812 411l4-1M1824 395l4 8M1826 411l3-2" stroke-width="1.700"/>
          <g stroke-width="1.400"><path d="M1744 449l24-6M1746 454l22-7M1751 441l10 17M1758 441l-3 19M1765 446l4 7M1748 459l12-4"/><path d="M1836 446l14-8M1842 446l20-2M1845 440l8 16M1852 440l-4 12M1845 452l17-4M1853 458l4-5"/><path d="M1751 382l14-4M1754 388l12-5M1757 378l5 12M1762 379l-3 12"/><path d="M1840 381l8 2M1838 388l9-6M1842 379l1 11"/></g>
        </svg>
        <!-- navigation bar -->
        <nav aria-label="导航栏" class="absolute right-0.5 top-[215px] flex h-[165px] w-12 flex-col items-center rounded-lg border-[3px] border-[#9a9a9a] bg-[#d4d4d4]">
          <button aria-label="关闭导航栏" class="mt-0.5 self-end"><svg class="size-3" viewBox="0 0 12 12" fill="none" stroke="#777" stroke-width="1.500"><circle cx="6" cy="6" r="5"/><path d="M4 4l4 4M8 4L4 8"/></svg></button>
          <button aria-label="控制盘" class="mt-3 flex flex-col items-center gap-1.5"><svg class="size-9" viewBox="0 0 36 36"><path d="M14 2h13v12q0 12-13 13-12-1-13-12Q2 2 14 2z" fill="#e4e4e4" stroke="#777" stroke-width="1.500"/><circle cx="14" cy="14" r="6" fill="#d4d4d4" stroke="#777" stroke-width="1.500"/><path d="M9 18l-4 5M19 9l5-5" stroke="#777"/><path d="M19 22l4-4h12v11l-4 4H19z" fill="#7fb0e6" stroke="#3a6cab"/><path d="M19 22h12v11M31 22l4-4" fill="none" stroke="#c8defa"/></svg><svg class="h-[5px] w-2"><use href="#dd"/></svg></button>
          <i class="mt-1.5 h-0.5 w-9 shrink-0 bg-[#999]"></i>
          <button aria-label="区域放大" class="mt-2.5 flex flex-col items-center gap-3"><svg class="h-6 w-[26px]" viewBox="0 0 26 24"><path d="M2 1h15v15H2z" fill="#9db884" stroke="#68755c" stroke-width="1.500"/><circle cx="17" cy="16" r="5" fill="#eee" stroke="#666" stroke-width="1.500"/><path d="M20 19l5 5" stroke="#666" stroke-width="2"/></svg><svg class="h-[5px] w-2"><use href="#dd"/></svg></button>
          <button aria-label="自定义导航栏" class="mb-0.5 mt-auto self-end"><svg class="size-3" viewBox="0 0 12 12" fill="none" stroke="#777" stroke-width="1.500"><circle cx="6" cy="6" r="5"/><path d="M3 5h6M4 7h4"/></svg></button>
        </nav>
      </div>
      <div class="flex w-6 flex-col items-center justify-between bg-[#e9e9e9] py-2">
        <svg class="h-[6px] w-[10px] rotate-180"><use href="#dd"/></svg>
        <i class="mt-0.5 size-[22px] rounded-sm border-2 border-[#888] bg-linear-to-r from-[#f8f8f8] to-[#c9c9c9]"></i>
        <svg class="h-[6px] w-[10px]"><use href="#dd"/></svg>
      </div>
    </div>
    <div class="flex h-7 shrink-0 items-center border-t border-white bg-[#e9e9e9] pb-1">
      <span class="w-[109px] whitespace-pre pl-[29px] font-['DejaVu_Sans_Mono',monospace] text-[14px] text-black">1 : 200</span>
      <div class="grid grid-cols-[repeat(12,29px)] justify-items-center">
        <button aria-label="详细程度"><svg class="h-[18px] w-6" viewBox="0 0 24 18"><path d="M1 1h22v16H1z" fill="#fff" stroke="#444" stroke-width="2"/><path d="M1 1h22v4H1zM4 6h5v4H4zM15 6h5v4h-5zM9 10h6v4H9z" fill="#555c6c"/></svg></button>
        <button aria-label="视觉样式"><svg class="h-[18px] w-[22px]" viewBox="0 0 22 18"><path d="M1 7l5-6h15v9l-5 7H1z" fill="#8ec9f5" stroke="#1f5f9e" stroke-width="1.500"/><path d="M1 7h15v10M16 7l5-6" fill="none" stroke="#1f5f9e"/></svg></button>
        <button aria-label="日光路径"><svg class="size-[22px]" viewBox="0 0 22 22"><circle cx="9" cy="9" r="5" fill="#ffdf70" stroke="#e0a020" stroke-width="1.500"/><path d="M9 0v3M0 9h3M2 2l3 3M16 2l-3 3M2 16l3-3M9 15v3" stroke="#e0a020" stroke-width="1.500"/><use href="#rx" x="11" y="9" width="12" height="12"/></svg></button>
        <button aria-label="阴影"><svg class="size-[22px]" viewBox="0 0 22 22"><circle cx="9" cy="8" r="6" fill="#e0f0fd" stroke="#2f75b8" stroke-width="1.500"/><path d="M2 18h9" stroke="#333" stroke-width="3"/><use href="#rx" x="10" y="10" width="12" height="12"/></svg></button>
        <button aria-label="裁剪视图"><svg class="h-5 w-6" viewBox="0 0 24 20"><path d="M5 18V4h17M9 18V9h13" fill="none" stroke="#1f6fc0" stroke-width="2.500"/><path d="M0 13h3M16 0v3" stroke="#333" stroke-width="2"/><use href="#rx" x="12" y="8" width="12" height="12"/></svg></button>
        <button aria-label="显示裁剪区域"><svg class="h-5 w-6" viewBox="0 0 24 20"><path d="M5 18V4h10M9 18V9h6" fill="none" stroke="#1f6fc0" stroke-width="2.500"/><path d="M0 13h3" stroke="#a33" stroke-width="2"/><circle cx="19" cy="8" r="4" fill="#e0f0fd" stroke="#2f75b8" stroke-width="1.500"/><path d="M17 12h4v6h-4z" fill="#678"/></svg></button>
        <button aria-label="锁定三维视图"><svg class="size-[22px]" viewBox="0 0 22 22" fill="#eee" stroke="#444" stroke-width="1.400"><path d="M4 10v8h8V8L8 5zM1 11l7-8 6-2 7 8-6 1-6-7"/><path d="M5 12h3v6H5z" fill="#555"/><path d="M11 13h9v7h-9zM14 13v-3h6" stroke="#3b6f5c" fill="#d8e8df"/></svg></button>
        <button aria-label="临时隐藏/隔离"><svg class="h-[18px] w-6" viewBox="0 0 24 18" fill="#eee" stroke="#444" stroke-width="1.500"><circle cx="10" cy="13" r="4"/><circle cx="19" cy="10" r="4"/><path d="M6 12L1 5l3 1M23 9q0-6-6-7" fill="none"/></svg></button>
        <button aria-label="显示隐藏的图元"><svg class="h-[18px] w-3" viewBox="0 0 12 18" fill="#eee" stroke="#a0a0a0" stroke-width="1.400"><path d="M4 11q-3-2-3-5 0-4 5-4t5 4q0 3-3 5v4H4z"/></svg></button>
        <button aria-label="工作共享显示"><svg class="h-[18px] w-[22px]" viewBox="0 0 22 18" fill="none" stroke="#999" stroke-width="1.400"><path d="M1 2h16M2 1v15h8M12 9h9v8h-9z" stroke-dasharray="4 1"/><circle cx="16.500" cy="13" r="2"/></svg></button>
        <button aria-label="临时视图属性"><svg class="h-[18px] w-[22px]" viewBox="0 0 22 18" fill="none" stroke="#999" stroke-width="1.400"><path d="M2 16V6l4-4h12M2 6h14v6M2 10h14M7 6v10M12 6v10M19 17h2"/></svg></button>
        <button aria-label="显示约束"><svg class="h-[18px] w-[22px]" viewBox="0 0 22 18" fill="none" stroke="#999" stroke-width="1.400"><path d="M5 6l4-4h8l-3 4v10H5zM14 6H5M1 8v7M20 4v9l-3 3V7z"/></svg></button>
      </div>
      <div class="flex flex-1 items-center justify-between pl-3.5 pr-[11px]">
        <svg class="h-[10px] w-[6px]" viewBox="0 0 6 10"><path d="M6 0v10L0 5z" fill="#333"/></svg>
        <i class="ml-6 size-[22px] rounded-sm border-2 border-[#999] bg-linear-to-b from-[#f4f4f4] to-[#cfcfcf]"></i>
        <span class="flex items-center gap-4"><svg class="h-[10px] w-[6px]" viewBox="0 0 6 10"><path d="M0 0l6 5-6 5z" fill="#333"/></svg><svg class="h-3 w-3" viewBox="0 0 12 12" fill="#b0b0b0"><path d="M9 0h2v2H9zM5 4h2v2H5zM9 4h2v2H9zM1 8h2v2H1zM5 8h2v2H5zM9 8h2v2H9z"/></svg></span>
      </div>
    </div>
  </section>
</main>

<!-- status bar -->
<footer class="flex h-8 shrink-0 items-center border-t-2 border-[#8a8a8a] bg-linear-to-b from-[#dedede] to-[#c6c6c6] pl-[3px] text-black">
  <span class="flex-1">就绪</span>
  <div class="flex items-center gap-3 pr-0.5 text-[#979797]">
    <svg class="h-[22px] w-6" viewBox="0 0 24 22" fill="none" stroke="#979797" stroke-width="3"><circle cx="5" cy="6" r="3.500"/><circle cx="18" cy="6" r="3.500"/><path d="M8 6h7M7 9l5 5 4-5M12 12v8M14 15l5 5"/></svg>
    <svg class="h-[22px] w-6" viewBox="0 0 24 22" fill="#979797"><path d="M1 18L18 2h5v5l-3 2 3 3-3 3 3 7-8-4z"/></svg>
    <svg class="h-[22px] w-6" viewBox="0 0 24 22" fill="#979797"><path d="M3 1h12v8l8 9v4l-6-3-3-1h-4v4H8v-4H1v-3l3-4z"/></svg>
  </div>
  <div class="flex h-[30px] w-[207px] items-center justify-between border-l border-[#999] bg-[#eff7fc] pl-1 pr-2.5 text-[#3a82c8]">
    <svg class="size-6" viewBox="0 0 24 24"><path d="M3 2l18-1 2 20-19 2q-3-10-1-21z" fill="#e2501c"/><path d="M18 7H9q-3 0-2 3 0 2 5 2t5 3q0 2-4 2H6" fill="none" stroke="#fff" stroke-width="3"/></svg>
    <span class="text-[20px] font-bold">英</span>
    <svg class="h-[18px] w-[18px]" viewBox="0 0 18 18"><path d="M12 1q2 10-12 11 4 6 10 5 7-2 7-8-1-6-5-8z" fill="currentColor"/></svg>
    <svg class="size-4" viewBox="0 0 16 16"><path d="M2 2h5v4H2zM11 9h3v4l-3 3h-1l1-3z" fill="currentColor"/></svg>
    <svg class="h-4 w-6" viewBox="0 0 24 16"><path d="M1 1h22v14H1z" fill="#e6f2fc" stroke="currentColor" stroke-width="2"/><path d="M4 5h16M4 8h16" stroke="currentColor" stroke-width="2" stroke-dasharray="2 1.500"/><path d="M6 12h12" stroke="currentColor" stroke-width="2"/></svg>
    <svg class="h-[18px] w-[14px]" viewBox="0 0 14 18" fill="#a3a3a3"><circle cx="7" cy="4" r="4"/><path d="M0 15q0-6 7-6t7 6q0 3-3 3H3q-3 0-3-3z"/></svg>
    <svg class="size-[19px]" viewBox="0 0 19 19"><path d="M14 1l-2 4 2 3h4q1 6-6 6-2 0-3-1l-5 5q-3 1-3-2l6-6Q6 2 14 1z" fill="currentColor"/></svg>
  </div>
</footer>
<div class="h-[29px] shrink-0"></div>

<!-- recording overlays -->
<p class="pointer-events-none absolute right-[52px] top-[63px] z-20 flex gap-3 font-['Noto_Sans_CJK_SC',sans-serif] text-[24px] font-medium leading-9 text-[#f5200c]"><span>屏幕录像专家</span><span>未注册</span></p>
<div class="pointer-events-none absolute left-0 top-5 z-20 h-[170px] w-[480px] font-['Noto_Sans_CJK_SC',sans-serif] text-black">
  <svg class="absolute left-0 top-0 h-[170px] w-40" viewBox="0 0 480 510">
    <path d="M195 115L240 72L265 62L352 85L322 98L316 112L300 112L296 128Q255 140 228 128L232 112z" fill="#2f2f2f"/><path d="M318 108h11l3 28h-13z" fill="#f04a1a"/>
    <circle cx="264" cy="170" r="37" fill="#9cc95c"/>
    <path d="M88 158Q140 190 200 198Q245 208 266 246Q290 200 340 190Q385 178 430 180Q345 215 300 262Q272 300 262 345Q245 395 195 438Q240 350 240 290Q205 235 108 205Q92 185 88 158z" fill="#9bbf60"/>
    <path d="M75 185Q20 300 66 390Q105 455 190 460Q165 470 118 466Q30 415 27 310Q30 235 75 185z" fill="#27b35a"/>
    <path d="M450 225Q492 320 440 410Q380 510 240 506L160 490Q250 465 290 385Q340 270 450 225z" fill="#26b860"/>
  </svg>
  <strong class="absolute left-[171px] top-[27px] whitespace-nowrap text-[72px] font-black leading-[84px]">云发教育</strong>
  <p class="absolute left-[165px] top-[116px] flex gap-[14px] text-[25px] font-bold leading-9"><span class="flex gap-2"><b>用</b><b>知</b><b>识</b></span><span class="flex gap-2"><b>筑</b><b>梦</b><b>想</b></span><span class="flex gap-2"><b>造</b><b>未</b><b>来</b></span></p>
</div>
</body>
</html>
